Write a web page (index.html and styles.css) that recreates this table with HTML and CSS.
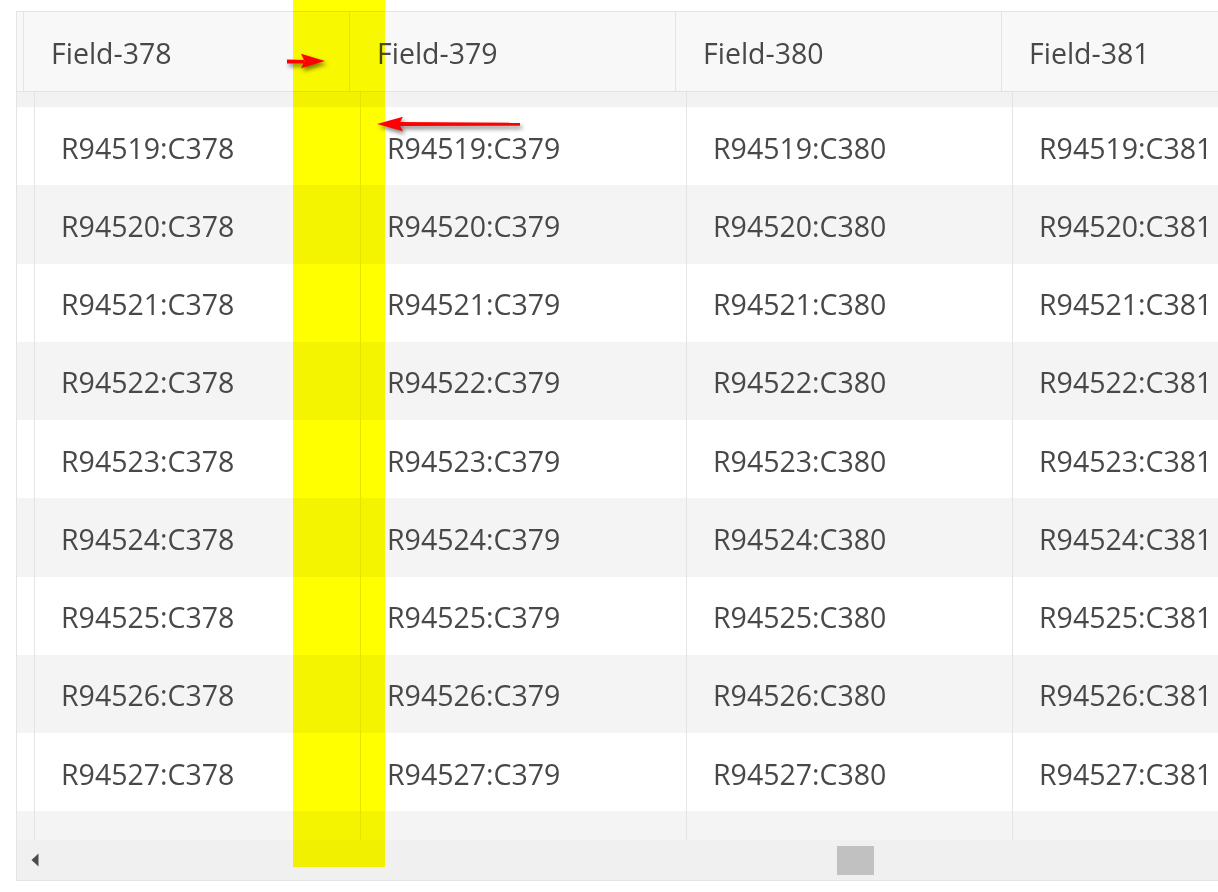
FILE: index.html
```html
<!DOCTYPE html>
<html>
<head>
<meta charset="utf-8">
<link rel="stylesheet" href="styles.css">
</head>
<body>
<div class="page">
  <div class="grid">
    <div class="header">
      <div class="hspacer"></div>
      <div class="hcell">Field-378</div>
      <div class="hcell">Field-379</div>
      <div class="hcell">Field-380</div>
      <div class="hcell">Field-381</div>
    </div>
    <div class="body">
      <div class="row alt top"><div class="bspacer"></div><div class="cell"></div><div class="cell"></div><div class="cell"></div><div class="cell"></div></div>
      <div class="row"><div class="bspacer"></div><div class="cell">R94519:C378</div><div class="cell">R94519:C379</div><div class="cell">R94519:C380</div><div class="cell">R94519:C381</div></div>
      <div class="row alt"><div class="bspacer"></div><div class="cell">R94520:C378</div><div class="cell">R94520:C379</div><div class="cell">R94520:C380</div><div class="cell">R94520:C381</div></div>
      <div class="row"><div class="bspacer"></div><div class="cell">R94521:C378</div><div class="cell">R94521:C379</div><div class="cell">R94521:C380</div><div class="cell">R94521:C381</div></div>
      <div class="row alt"><div class="bspacer"></div><div class="cell">R94522:C378</div><div class="cell">R94522:C379</div><div class="cell">R94522:C380</div><div class="cell">R94522:C381</div></div>
      <div class="row"><div class="bspacer"></div><div class="cell">R94523:C378</div><div class="cell">R94523:C379</div><div class="cell">R94523:C380</div><div class="cell">R94523:C381</div></div>
      <div class="row alt"><div class="bspacer"></div><div class="cell">R94524:C378</div><div class="cell">R94524:C379</div><div class="cell">R94524:C380</div><div class="cell">R94524:C381</div></div>
      <div class="row"><div class="bspacer"></div><div class="cell">R94525:C378</div><div class="cell">R94525:C379</div><div class="cell">R94525:C380</div><div class="cell">R94525:C381</div></div>
      <div class="row alt"><div class="bspacer"></div><div class="cell">R94526:C378</div><div class="cell">R94526:C379</div><div class="cell">R94526:C380</div><div class="cell">R94526:C381</div></div>
      <div class="row"><div class="bspacer"></div><div class="cell">R94527:C378</div><div class="cell">R94527:C379</div><div class="cell">R94527:C380</div><div class="cell">R94527:C381</div></div>
      <div class="row alt"><div class="bspacer"></div><div class="cell"></div><div class="cell"></div><div class="cell"></div><div class="cell"></div></div>
    </div>
    <div class="hscroll">
      <svg class="sarrow" width="8" height="14" viewBox="0 0 8 14"><polygon points="7.5,0.5 0.5,7 7.5,13.5" fill="#4a4a4a"/></svg>
      <div class="thumb"></div>
    </div>
  </div>

  <div class="highlight"></div>

  <svg class="arrow arrow-right" width="50" height="24" viewBox="0 0 50 24">
    <polygon points="4,9.6 21,10 21,13.4 4,13.6" fill="#ff0000"/>
    <polygon points="18,3.8 42,11 18,18.2 21.5,11" fill="#ff0000"/>
  </svg>

  <svg class="arrow arrow-left" width="156" height="24" viewBox="0 0 156 24">
    <polygon points="5,12 31,4.8 27,12 31,19.2" fill="#ff0000"/>
    <polygon points="27,10 148,10.8 148,13.8 27,14" fill="#ff0000"/>
  </svg>
</div>
</body>
</html>
```

FILE: styles.css
```css
html, body {
  margin: 0;
  padding: 0;
  background: #ffffff;
  overflow: hidden;
  width: 1218px;
  height: 892px;
}

.page {
  position: relative;
  width: 1218px;
  height: 892px;
  overflow: hidden;
  font-family: "Open Sans", "Noto Sans", "Liberation Sans", sans-serif;
  font-size: 28.5px;
  color: #484848;
}

.grid {
  margin: 11px 0 0 16px;
  width: 1340px;
  border: 1px solid #e4e4e4;
  display: flex;
  flex-direction: column;
  background: #ffffff;
}

.header {
  display: flex;
  height: 79px;
  background: #f8f8f8;
  border-bottom: 1px solid #e2e2e2;
}

.hspacer {
  flex: 0 0 6px;
  border-right: 1px solid #e4e4e4;
}

.hcell {
  flex: 0 0 326px;
  box-sizing: border-box;
  border-right: 1px solid #e4e4e4;
  display: flex;
  align-items: center;
  padding: 2px 0 0 27px;
  white-space: nowrap;
}

.body {
  height: 748px;
  overflow: hidden;
  display: flex;
  flex-direction: column;
}

.row {
  display: flex;
  flex: 0 0 78.25px;
  background: #ffffff;
}

.row.alt {
  background: #f4f4f4;
}

.row.top {
  flex-basis: 15px;
  background: #f2f2f2;
}

.bspacer {
  flex: 0 0 17px;
  border-right: 1px solid #e4e4e4;
}

.cell {
  flex: 0 0 326px;
  box-sizing: border-box;
  border-right: 1px solid #e4e4e4;
  display: flex;
  align-items: center;
  padding: 3px 0 0 26px;
  white-space: nowrap;
  overflow: hidden;
}

.hscroll {
  height: 40px;
  background: #f0f0f0;
  display: flex;
  align-items: center;
}

.sarrow {
  margin-left: 14px;
  flex: 0 0 8px;
}

.thumb {
  margin-left: 798px;
  width: 37px;
  height: 29px;
  background: #c1c1c1;
}

.highlight {
  position: absolute;
  left: 293px;
  top: 0;
  width: 92px;
  height: 867px;
  background: #ffff00;
  mix-blend-mode: multiply;
}

.arrow {
  position: absolute;
  filter: drop-shadow(2px 3px 2px rgba(0, 0, 0, 0.5));
}

.arrow-right {
  left: 283px;
  top: 50px;
}

.arrow-left {
  left: 372px;
  top: 112px;
}
```
